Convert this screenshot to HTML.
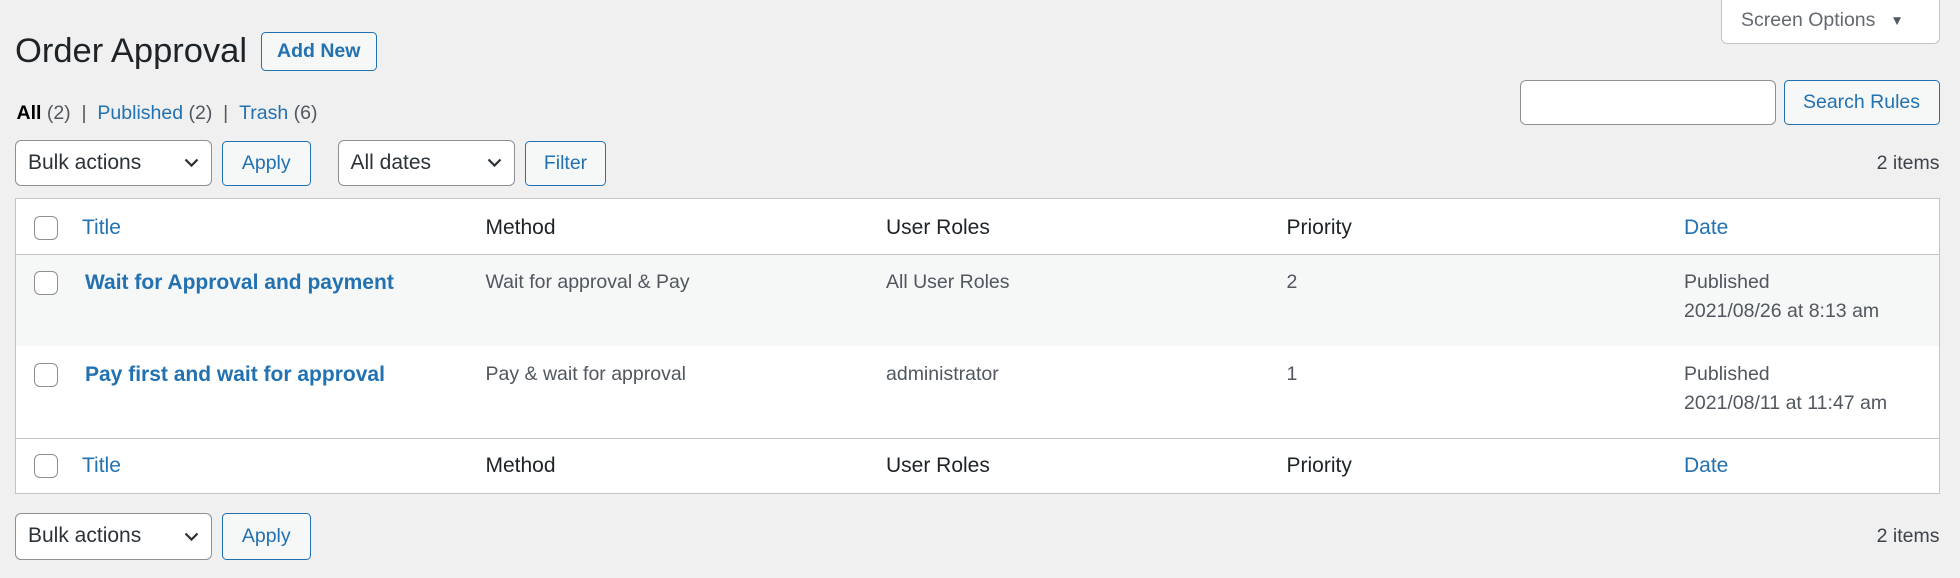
<!DOCTYPE html>
<html><head><meta charset="utf-8"><style>
*{box-sizing:border-box;margin:0;padding:0}
html,body{width:1960px;height:578px;overflow:hidden;background:#f0f0f1}
#r{zoom:1.5;position:relative;width:1307px;height:386px;font-family:"Liberation Sans",Arial,sans-serif;font-size:13px;color:#3c434a}
.a{position:absolute}
.btn{position:absolute;border:1px solid #2271b1;color:#2271b1;background:#f6f7f7;border-radius:3px;font-size:13px;display:flex;align-items:center;justify-content:center}
.sel{position:absolute;border:1px solid #8c8f94;background:#fff;border-radius:4px;color:#2c3338;font-size:14px;padding-left:8px;display:flex;align-items:center}
.sel svg{position:absolute;right:8px;top:50%;margin-top:-5px}
a{color:#2271b1;text-decoration:none}
.tbl{position:absolute;left:10px;top:132px;width:1283px;height:197px;border:1px solid #c3c4c7;background:#fff}
.row{position:absolute;left:0;width:100%}
.cb{position:absolute;left:12px;width:16px;height:16px;border:1px solid #8c8f94;border-radius:4px;background:#fff}
.th{position:absolute;font-size:14px;color:#1d2327}
.td{position:absolute;font-size:13px;color:#50575e;line-height:19.5px}
</style></head><body><div id="r">
<div class="a" style="left:1147px;top:-1px;width:146px;height:30px;background:#fff;border:1px solid #c3c4c7;border-top:none;border-radius:0 0 4px 4px;font-size:13px;color:#646970;display:flex;align-items:center;padding-left:13px">Screen Options <span style="font-size:9px;margin-left:10px;color:#50575e">▼</span></div>
<div class="a" style="left:10px;top:19px;font-size:23px;color:#1d2327;line-height:30px">Order Approval</div>
<div class="btn" style="left:174px;top:21px;width:77px;height:26px;font-weight:600;background:#f6f7f7">Add New</div>
<div class="a" style="left:11px;top:67px;font-size:13px;color:#50575e;line-height:16px"><b style="color:#000;font-weight:600">All</b> (2) &nbsp;| &nbsp;<a>Published</a> (2) &nbsp;| &nbsp;<a>Trash</a> (6)</div>
<div class="a" style="left:1013px;top:53px;width:171px;height:30px;background:#fff;border:1px solid #8c8f94;border-radius:4px"></div>
<div class="btn" style="left:1189px;top:53px;width:104px;height:30px">Search Rules</div>
<div class="sel" style="left:10px;top:93px;width:131px;height:31px">Bulk actions<svg width="10" height="10" viewBox="0 0 10 10"><path d="M1 3l4 4 4-4" fill="none" stroke="#2c3338" stroke-width="1.5"/></svg></div>
<div class="btn" style="left:148px;top:94px;width:59px;height:30px">Apply</div>
<div class="sel" style="left:225px;top:93px;width:118px;height:31px">All dates<svg width="10" height="10" viewBox="0 0 10 10"><path d="M1 3l4 4 4-4" fill="none" stroke="#2c3338" stroke-width="1.5"/></svg></div>
<div class="btn" style="left:350px;top:94px;width:54px;height:30px">Filter</div>
<div class="a" style="right:14px;top:101px;font-size:13px;color:#3c434a">2 items</div>
<div class="tbl">
<div class="row" style="top:0;height:37px;border-bottom:1px solid #c3c4c7">
<div class="cb" style="top:11px"></div>
<div class="th" style="left:44px;top:11px"><a>Title</a></div>
<div class="th" style="left:313px;top:11px">Method</div>
<div class="th" style="left:580px;top:11px">User Roles</div>
<div class="th" style="left:847px;top:11px">Priority</div>
<div class="th" style="left:1112px;top:11px"><a>Date</a></div>
</div>
<div class="row" style="top:37px;height:61px;background:#f6f7f7">
<div class="cb" style="top:11px"></div>
<div class="td" style="left:46px;top:9px;font-size:14px;font-weight:700"><a>Wait for Approval and payment</a></div>
<div class="td" style="left:313px;top:9px">Wait for approval &amp; Pay</div>
<div class="td" style="left:580px;top:9px">All User Roles</div>
<div class="td" style="left:847px;top:9px">2</div>
<div class="td" style="left:1112px;top:9px">Published<br>2021/08/26 at 8:13 am</div>
</div>
<div class="row" style="top:98px;height:61px;background:#fff">
<div class="cb" style="top:11px"></div>
<div class="td" style="left:46px;top:9px;font-size:14px;font-weight:700"><a>Pay first and wait for approval</a></div>
<div class="td" style="left:313px;top:9px">Pay &amp; wait for approval</div>
<div class="td" style="left:580px;top:9px">administrator</div>
<div class="td" style="left:847px;top:9px">1</div>
<div class="td" style="left:1112px;top:9px">Published<br>2021/08/11 at 11:47 am</div>
</div>
<div class="row" style="top:159px;height:37px;border-top:1px solid #c3c4c7">
<div class="cb" style="top:10px"></div>
<div class="th" style="left:44px;top:10px"><a>Title</a></div>
<div class="th" style="left:313px;top:10px">Method</div>
<div class="th" style="left:580px;top:10px">User Roles</div>
<div class="th" style="left:847px;top:10px">Priority</div>
<div class="th" style="left:1112px;top:10px"><a>Date</a></div>
</div>
</div>
<div class="sel" style="left:10px;top:342px;width:131px;height:31px">Bulk actions<svg width="10" height="10" viewBox="0 0 10 10"><path d="M1 3l4 4 4-4" fill="none" stroke="#2c3338" stroke-width="1.5"/></svg></div>
<div class="btn" style="left:148px;top:342px;width:59px;height:31px">Apply</div>
<div class="a" style="right:14px;top:350px;font-size:13px;color:#3c434a">2 items</div>
</div></body></html>
